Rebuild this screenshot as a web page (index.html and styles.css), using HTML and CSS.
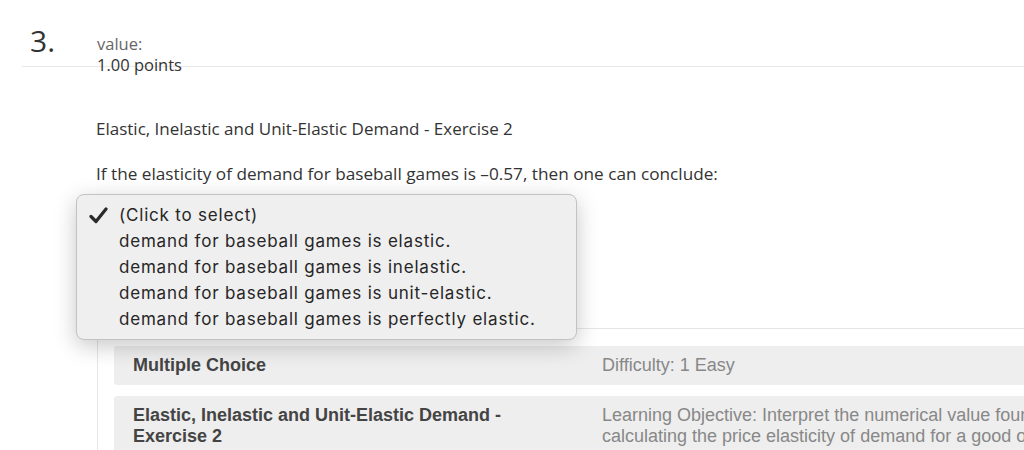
FILE: index.html
```html
<!DOCTYPE html>
<html>
<head>
<meta charset="utf-8">
<link rel="stylesheet" href="styles.css">
</head>
<body>
<div class="question">
  <div class="q-head">
    <div class="q-num">3.</div>
    <div class="q-value">
      <div class="q-value-label">value:</div>
      <div class="q-value-points">1.00 points</div>
    </div>
  </div>
  <div class="q-body">
    <p class="q-title">Elastic, Inelastic and Unit-Elastic Demand - Exercise 2</p>
    <p class="q-text">If the elasticity of demand for baseball games is –0.57, then one can conclude:</p>
    <div class="answer">
      <ul class="menu">
        <li class="menu-item selected">
          <svg class="check" width="19" height="17" viewBox="0 0 19 17"><path d="M2 9.5 L7 14.5 L17 2" fill="none" stroke="#2a2a2a" stroke-width="3.2" stroke-linecap="round" stroke-linejoin="round"/></svg>
          (Click to select)
        </li>
        <li class="menu-item">demand for baseball games is elastic.</li>
        <li class="menu-item">demand for baseball games is inelastic.</li>
        <li class="menu-item">demand for baseball games is unit-elastic.</li>
        <li class="menu-item">demand for baseball games is perfectly elastic.</li>
      </ul>
    </div>
    <div class="panel">
      <div class="row">
        <div class="row-left">Multiple Choice</div>
        <div class="row-right">Difficulty: 1 Easy</div>
      </div>
      <div class="row">
        <div class="row-left">Elastic, Inelastic and Unit-Elastic Demand - Exercise 2</div>
        <div class="row-right">Learning Objective: Interpret the numerical value found when calculating the price elasticity of demand for a good or service.</div>
      </div>
    </div>
  </div>
</div>
</body>
</html>
```

FILE: styles.css
```css
html, body {
  margin: 0;
  padding: 0;
  overflow: hidden;
  background: #fff;
}
body {
  font-family: "Open Sans", "Liberation Sans", sans-serif;
  color: #333;
  width: 1400px;
}
.q-head {
  margin-left: 22px;
  height: 66px;
  border-bottom: 1px solid #e8e8e8;
  display: flex;
  align-items: flex-start;
}
.q-num {
  width: 67px;
  padding-left: 8px;
  padding-top: 26px;
  font-size: 30px;
  line-height: 30px;
  color: #333;
}
.q-value {
  padding-top: 33px;
  font-size: 16.5px;
  line-height: 21px;
}
.q-value-label {
  color: #666;
}
.q-value-points {
  color: #333;
}
.q-body {
  padding-left: 96px;
}
.q-title {
  margin: 52px 0 0;
  font-size: 17px;
  line-height: 20px;
}
.q-text {
  margin: 25px 0 0;
  font-size: 17.2px;
  line-height: 20px;
}
.answer {
  position: relative;
  height: 144px;
}
.menu {
  position: absolute;
  left: -20px;
  top: 10px;
  z-index: 2;
  width: 499px;
  margin: 0;
  padding: 7px 0;
  list-style: none;
  background: #efefef;
  border: 1px solid #c2c2c2;
  border-radius: 8px;
  box-shadow: 0 6px 22px rgba(0, 0, 0, 0.22);
  font-family: "Inter", "Noto Sans", sans-serif;
  font-size: 17px;
  letter-spacing: 0.8px;
  line-height: 26px;
  color: #262626;
}
.menu-item {
  position: relative;
  padding-left: 42px;
}
.check {
  position: absolute;
  left: 12px;
  top: 5px;
}
.panel {
  margin-left: 1px;
  border-top: 1px solid #e6e6e6;
  border-left: 1px solid #e6e6e6;
  padding: 17px 0 0 16px;
  font-family: "Liberation Sans", Arial, sans-serif;
  font-size: 18px;
  line-height: 21px;
}
.row {
  display: flex;
  background: #eeeeee;
  border-radius: 3px;
  padding: 9px 19px;
  margin-bottom: 11px;
}
.row-left {
  width: 469px;
  flex: none;
  font-weight: bold;
  color: #444;
  padding-right: 60px;
  box-sizing: border-box;
}
.row-right {
  width: 515px;
  flex: none;
  color: #888;
}
```
